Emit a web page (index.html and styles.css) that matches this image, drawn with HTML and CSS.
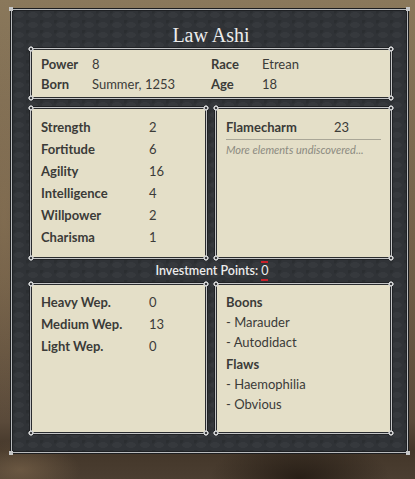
FILE: index.html
```html
<!DOCTYPE html>
<html>
<head>
<meta charset="utf-8">
<link rel="stylesheet" href="styles.css">
</head>
<body>
<div class="panel">
  <h1 class="title">Law Ashi</h1>
  <section class="card card-info">
    <div class="info-grid">
      <span class="lbl">Power</span><span class="val">8</span>
      <span class="lbl">Race</span><span class="val">Etrean</span>
      <span class="lbl">Born</span><span class="val">Summer, 1253</span>
      <span class="lbl">Age</span><span class="val">18</span>
    </div>
  </section>
  <div class="row row-top">
    <section class="card card-stats">
      <div class="stat"><span class="lbl">Strength</span><span class="val">2</span></div>
      <div class="stat"><span class="lbl">Fortitude</span><span class="val">6</span></div>
      <div class="stat"><span class="lbl">Agility</span><span class="val">16</span></div>
      <div class="stat"><span class="lbl">Intelligence</span><span class="val">4</span></div>
      <div class="stat"><span class="lbl">Willpower</span><span class="val">2</span></div>
      <div class="stat"><span class="lbl">Charisma</span><span class="val">1</span></div>
    </section>
    <section class="card card-elements">
      <div class="element"><span class="lbl">Flamecharm</span><span class="val">23</span></div>
      <div class="undiscovered">More elements undiscovered...</div>
    </section>
  </div>
  <div class="invest">Investment Points: <span class="invest-num">0</span></div>
  <div class="row row-bottom">
    <section class="card card-weapons">
      <div class="stat"><span class="lbl">Heavy Wep.</span><span class="val">0</span></div>
      <div class="stat"><span class="lbl">Medium Wep.</span><span class="val">13</span></div>
      <div class="stat"><span class="lbl">Light Wep.</span><span class="val">0</span></div>
    </section>
    <section class="card card-traits">
      <div class="trait-head">Boons</div>
      <div class="trait">- Marauder</div>
      <div class="trait">- Autodidact</div>
      <div class="trait-head flaws">Flaws</div>
      <div class="trait">- Haemophilia</div>
      <div class="trait">- Obvious</div>
    </section>
  </div>
</div>
</body>
</html>
```
FILE: styles.css
```css
* { box-sizing: border-box; }
html, body { margin: 0; padding: 0; }
body {
  width: 415px;
  height: 479px;
  overflow: hidden;
  font-family: Lato, "Noto Sans", sans-serif;
  background:
    radial-gradient(ellipse 90px 40px at 300px 478px, rgba(25,18,12,0.7), transparent),
    radial-gradient(ellipse 60px 30px at 20px 470px, rgba(140,115,85,0.5), transparent),
    radial-gradient(ellipse 30px 200px at 4px 220px, rgba(150,125,90,0.35), transparent),
    linear-gradient(180deg, #8a785b 0%, #7c6a51 30%, #6e5c46 60%, #5a4a3a 88%, #433629 94%, #4b3e31 100%);
  padding: 9px 7px 0 11px;
}
.panel {
  position: relative;
  width: 397px;
  height: 444px;
  background-color: #303337;
  background-image:
    radial-gradient(ellipse 5px 3px at 50% 50%, rgba(255,255,255,0.03) 0 90%, transparent 100%),
    radial-gradient(circle at 0 0, rgba(0,0,0,0.1) 0 3px, transparent 4px);
  background-size: 14px 10px, 14px 10px;
  border: 1px solid #b9bbbd;
  box-shadow: 0 0 0 1px #1c1d1f, inset 0 0 0 1px #1f2124;
  padding: 0 15px 0 18px;
  display: flex;
  flex-direction: column;
}
.panel::before {
  content: "";
  position: absolute;
  inset: -3px;
  pointer-events: none;
  background:
    linear-gradient(#c6c7c8, #c6c7c8) left top / 4px 4px no-repeat,
    linear-gradient(#c6c7c8, #c6c7c8) right top / 4px 4px no-repeat,
    linear-gradient(#c6c7c8, #c6c7c8) left bottom / 4px 4px no-repeat,
    linear-gradient(#c6c7c8, #c6c7c8) right bottom / 4px 4px no-repeat;
}
.title {
  margin: 0;
  height: 38px;
  padding-top: 13px;
  font-family: "Liberation Serif", serif;
  font-weight: normal;
  font-size: 20px;
  line-height: 24px;
  color: #ececec;
  text-align: center;
}
.card {
  position: relative;
  background: #e4dfc8;
  border: 1px solid #c4c5c6;
  box-shadow: 0 0 0 1px #202225, inset 0 0 0 1px #2a2c2f;
  color: #3b3b38;
  font-size: 13px;
}
.card::before {
  content: "";
  position: absolute;
  inset: -3px;
  pointer-events: none;
  background:
    radial-gradient(circle, #3a3c3f 0 0.8px, #cfd0d1 1.2px 2.4px, transparent 2.8px) left top / 6px 6px no-repeat,
    radial-gradient(circle, #3a3c3f 0 0.8px, #cfd0d1 1.2px 2.4px, transparent 2.8px) right top / 6px 6px no-repeat,
    radial-gradient(circle, #3a3c3f 0 0.8px, #cfd0d1 1.2px 2.4px, transparent 2.8px) left bottom / 6px 6px no-repeat,
    radial-gradient(circle, #3a3c3f 0 0.8px, #cfd0d1 1.2px 2.4px, transparent 2.8px) right bottom / 6px 6px no-repeat;
}
.lbl { font-weight: bold; }
.val { font-weight: normal; }

.card-info {
  height: 51px;
  padding: 5px 10px 0 10px;
}
.info-grid {
  display: grid;
  grid-template-columns: 51px 119px 51px auto;
  line-height: 20px;
}

.row {
  display: flex;
  gap: 8px;
  margin-top: 8px;
}
.row .card { flex: 0 0 177px; }
.row-top .card { height: 152px; }
.row-bottom { margin-top: 0; }
.row-bottom .card { height: 151px; }

.card-stats, .card-weapons { padding: 8px 10px 0 10px; }
.card-weapons { padding-top: 7px; }
.stat {
  display: flex;
  line-height: 22px;
}
.stat .lbl { width: 108px; }

.card-elements { padding: 8px 10px 0 10px; }
.element {
  display: flex;
  line-height: 22px;
  padding-bottom: 1px;
  border-bottom: 1px solid #a9a697;
}
.element .lbl { width: 108px; }
.undiscovered {
  font-style: italic;
  font-size: 11px;
  color: #8b8a80;
  line-height: 18px;
  margin-top: 1px;
}

.invest {
  height: 24px;
  line-height: 24px;
  text-align: center;
  color: #ececec;
  font-size: 12.5px;
  font-weight: 600;
  padding-left: 2px;
}
.invest-num {
  position: relative;
  display: inline-block;
  line-height: 12px;
  font-weight: normal;
}
.invest-num::before, .invest-num::after {
  content: "";
  position: absolute;
  left: 0;
  width: 7px;
  height: 2px;
  background: #c8202a;
}
.invest-num::before { top: -4px; }
.invest-num::after { bottom: -4px; }

.card-traits { padding: 8px 10px 0 10px; }
.trait-head { font-weight: bold; line-height: 20px; }
.trait-head.flaws { margin-top: 2px; }
.trait { line-height: 20px; }
```
